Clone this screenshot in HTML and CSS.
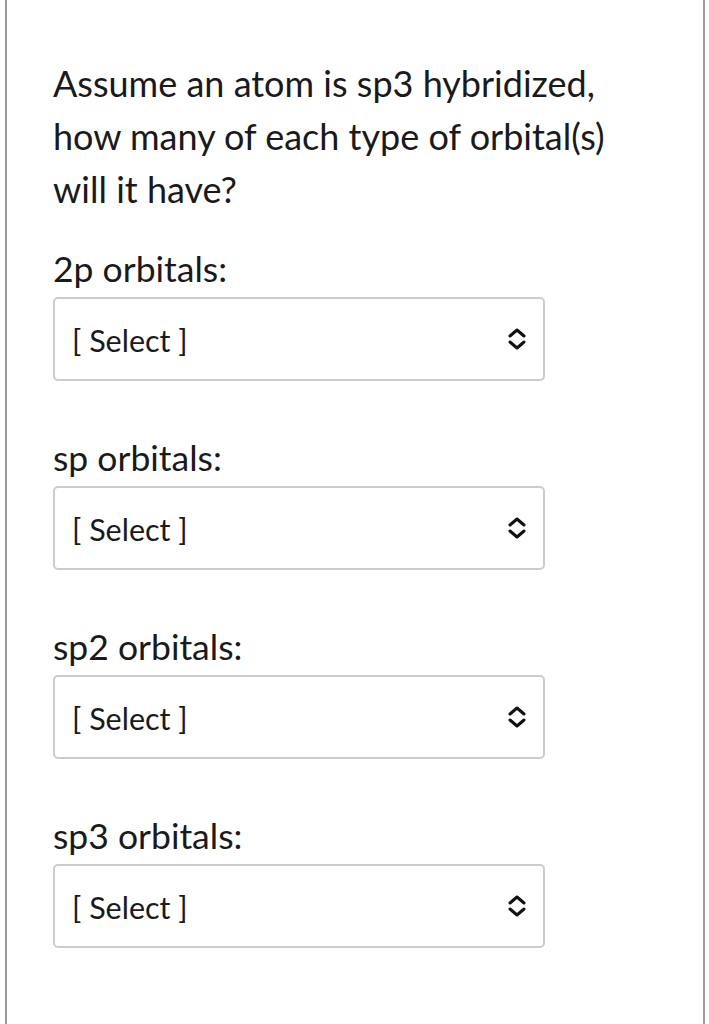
FILE: index.html
```html
<!DOCTYPE html>
<html>
<head>
<meta charset="utf-8">
<link rel="stylesheet" href="styles.css">
</head>
<body>
<div class="frame">
  <div class="content">
    <p class="question">Assume an atom is sp3 hybridized, how many of each type of orbital(s) will it have?</p>
    <div class="field">
      <div class="label">2p orbitals:</div>
      <div class="select"><span>[ Select ]</span><svg class="chev" viewBox="0 0 20 24" width="20" height="24"><path d="M3 9 L10 3 L17 9 M3 15 L10 21 L17 15" fill="none" stroke="#111" stroke-width="3" stroke-linecap="round" stroke-linejoin="round"/></svg></div>
    </div>
    <div class="field">
      <div class="label">sp orbitals:</div>
      <div class="select"><span>[ Select ]</span><svg class="chev" viewBox="0 0 20 24" width="20" height="24"><path d="M3 9 L10 3 L17 9 M3 15 L10 21 L17 15" fill="none" stroke="#111" stroke-width="3" stroke-linecap="round" stroke-linejoin="round"/></svg></div>
    </div>
    <div class="field">
      <div class="label">sp2 orbitals:</div>
      <div class="select"><span>[ Select ]</span><svg class="chev" viewBox="0 0 20 24" width="20" height="24"><path d="M3 9 L10 3 L17 9 M3 15 L10 21 L17 15" fill="none" stroke="#111" stroke-width="3" stroke-linecap="round" stroke-linejoin="round"/></svg></div>
    </div>
    <div class="field">
      <div class="label">sp3 orbitals:</div>
      <div class="select"><span>[ Select ]</span><svg class="chev" viewBox="0 0 20 24" width="20" height="24"><path d="M3 9 L10 3 L17 9 M3 15 L10 21 L17 15" fill="none" stroke="#111" stroke-width="3" stroke-linecap="round" stroke-linejoin="round"/></svg></div>
    </div>
  </div>
</div>
</body>
</html>
```
FILE: styles.css
```css
html, body {
  margin: 0;
  padding: 0;
  background: #fff;
}
body {
  font-family: Lato, "Open Sans", sans-serif;
  color: #1a1a1a;
}
.frame {
  margin: 0 4px 0 5px;
  border-left: 2px solid #9a9a9a;
  border-right: 2px solid #9a9a9a;
  min-height: 1024px;
  box-sizing: border-box;
}
.content {
  padding: 57px 0 0 46px;
  width: 492px;
}
.question {
  margin: 0;
  font-size: 36px;
  line-height: 53px;
  width: 560px;
}
.field {
  margin-top: 30px;
}
.field + .field {
  margin-top: 54px;
}
.label {
  font-size: 35.5px;
  line-height: 46px;
  margin-bottom: 5px;
}
.select {
  box-sizing: border-box;
  height: 84px;
  border: 2px solid #c9cdd0;
  border-radius: 5px;
  display: flex;
  align-items: center;
  justify-content: space-between;
  padding: 0 16px 0 17px;
  font-size: 30.5px;
}
.select span {
  padding-top: 2px;
}
.chev {
  display: block;
}
```
